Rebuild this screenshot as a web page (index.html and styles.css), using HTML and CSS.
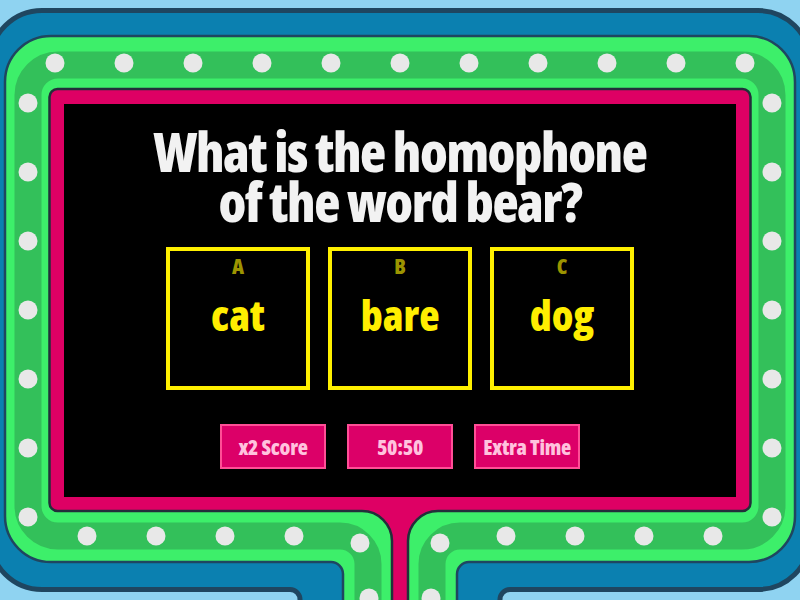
FILE: index.html
```html
<!DOCTYPE html>
<html lang="en">
<head>
    <meta charset="UTF-8">
    <meta name="viewport" content="width=device-width, initial-scale=1.0">
    <title>Gameshow Quiz</title>
    <link rel="stylesheet" href="styles.css">
</head>
<body>
    <div class="stage">
        <!-- studio frame: cabinet, light strip, screen border -->
        <svg class="frame" viewBox="0 0 800 600" width="800" height="600" aria-hidden="true">
            <rect class="sky" width="800" height="600"/>
            <path class="cabinet" d="M-10 62 A52 52 0 0 1 42 10.5 H758 A52 52 0 0 1 810 62 V538 A52 52 0 0 1 758 589.5 H510 A10 10 0 0 0 500 600 V620 H300 V600 A10 10 0 0 0 290 589.5 H42 A52 52 0 0 1 -10 538 Z"/>
            <path class="lights" d="M5 82 A46 46 0 0 1 51 36 H749 A46 46 0 0 1 795 82 V516 A46 46 0 0 1 749 562 H469 A12 12 0 0 0 457 574 V620 H343 V574 A12 12 0 0 0 331 562 H51 A46 46 0 0 1 5 516 Z"/>
            <path class="track" d="M368 620 V564 A28 28 0 0 0 340 536 H58 A30 30 0 0 1 28 506 V95 A30 30 0 0 1 58 65 H742 A30 30 0 0 1 772 95 V506 A30 30 0 0 1 742 536 H460 A28 28 0 0 0 432 564 V620"/>
            <g class="bulbs">
                <circle cx="55" cy="63" r="9.5"/><circle cx="124" cy="63" r="9.5"/><circle cx="193" cy="63" r="9.5"/>
                <circle cx="262" cy="63" r="9.5"/><circle cx="331" cy="63" r="9.5"/><circle cx="400" cy="63" r="9.5"/>
                <circle cx="469" cy="63" r="9.5"/><circle cx="538" cy="63" r="9.5"/><circle cx="607" cy="63" r="9.5"/>
                <circle cx="676" cy="63" r="9.5"/><circle cx="745" cy="63" r="9.5"/>
                <circle cx="28" cy="103" r="9.5"/><circle cx="28" cy="172" r="9.5"/><circle cx="28" cy="241" r="9.5"/>
                <circle cx="28" cy="310" r="9.5"/><circle cx="28" cy="379" r="9.5"/><circle cx="28" cy="448" r="9.5"/>
                <circle cx="28" cy="517" r="9.5"/>
                <circle cx="772" cy="103" r="9.5"/><circle cx="772" cy="172" r="9.5"/><circle cx="772" cy="241" r="9.5"/>
                <circle cx="772" cy="310" r="9.5"/><circle cx="772" cy="379" r="9.5"/><circle cx="772" cy="448" r="9.5"/>
                <circle cx="772" cy="517" r="9.5"/>
                <circle cx="87" cy="536" r="9.5"/><circle cx="156" cy="536" r="9.5"/><circle cx="225" cy="536" r="9.5"/>
                <circle cx="294" cy="536" r="9.5"/><circle cx="360" cy="543" r="9.5"/><circle cx="369" cy="598" r="9.5"/>
                <circle cx="713" cy="536" r="9.5"/><circle cx="644" cy="536" r="9.5"/><circle cx="575" cy="536" r="9.5"/>
                <circle cx="506" cy="536" r="9.5"/><circle cx="440" cy="543" r="9.5"/><circle cx="431" cy="598" r="9.5"/>
            </g>
            <path class="bezel" d="M57.5 89 H742.5 A8 8 0 0 1 750.5 97 V503 A8 8 0 0 1 742.5 511 H438 A30 30 0 0 0 408 541 V620 H392 V541 A30 30 0 0 0 362 511 H57.5 A8 8 0 0 1 49.5 503 V97 A8 8 0 0 1 57.5 89 Z"/>
        </svg>

        <main class="screen">
            <h1 class="question">What is the homophone<br>of the word bear?</h1>
            <div class="answers">
                <div class="answer"><span class="letter">A</span><span class="word">cat</span></div>
                <div class="answer"><span class="letter">B</span><span class="word">bare</span></div>
                <div class="answer"><span class="letter">C</span><span class="word">dog</span></div>
            </div>
            <div class="powerups">
                <button class="powerup">x2 Score</button>
                <button class="powerup">50:50</button>
                <button class="powerup">Extra Time</button>
            </div>
        </main>
    </div>
</body>
</html>
```

FILE: styles.css
```css
body{
    margin: 0;
    background: #8fd3f1;
    overflow: hidden;
    font-family: "Open Sans", "DejaVu Sans", sans-serif;
    font-stretch: 75%;
    font-weight: 800;
}
.stage{
    display: grid;
    width: 800px;
    height: 600px;
}
.frame,
.screen{
    grid-area: 1 / 1;
}
/* frame */
.sky{ fill: #8fd3f1; }
.cabinet{
    fill: #0b80b0;
    stroke: #1f4660;
    stroke-width: 5;
}
.lights{
    fill: #3def6a;
    stroke: #1f4660;
    stroke-width: 2.5;
}
.track{
    fill: none;
    stroke: #33c05a;
    stroke-width: 27;
}
.bulbs circle{ fill: #e8e8e8; }
.bezel{
    fill: #de0064;
    stroke: #22303a;
    stroke-width: 2.5;
}
/* screen */
.screen{
    align-self: start;
    justify-self: start;
    margin: 104px 0 0 64px;
    width: 672px;
    height: 393px;
    background: #000;
    display: flex;
    flex-direction: column;
    align-items: center;
}
.question{
    margin: 22px 0 0;
    font-size: 54px;
    font-weight: 800;
    line-height: 50px;
    letter-spacing: -1.4px;
    color: #f2f2f2;
    text-align: center;
    white-space: nowrap;
}
.answers{
    display: flex;
    gap: 18px;
    margin-top: 21px;
}
.answer{
    box-sizing: border-box;
    width: 144px;
    height: 143px;
    border: 4px solid #fff000;
    display: flex;
    flex-direction: column;
    align-items: center;
}
.letter{
    margin-top: 3px;
    font-size: 21px;
    line-height: 24px;
    color: #9c9400;
}
.word{
    margin-top: 13px;
    font-size: 42px;
    line-height: 48px;
    color: #ffee00;
}
.powerups{
    display: flex;
    gap: 21px;
    margin-top: 34px;
}
.powerup{
    box-sizing: border-box;
    width: 106px;
    height: 45px;
    padding: 0;
    border: 2px solid #ff4f96;
    background: #dc0068;
    color: #ffc2de;
    font-family: inherit;
    font-stretch: 75%;
    font-weight: 800;
    font-size: 21px;
    letter-spacing: -0.3px;
    white-space: nowrap;
}
```
